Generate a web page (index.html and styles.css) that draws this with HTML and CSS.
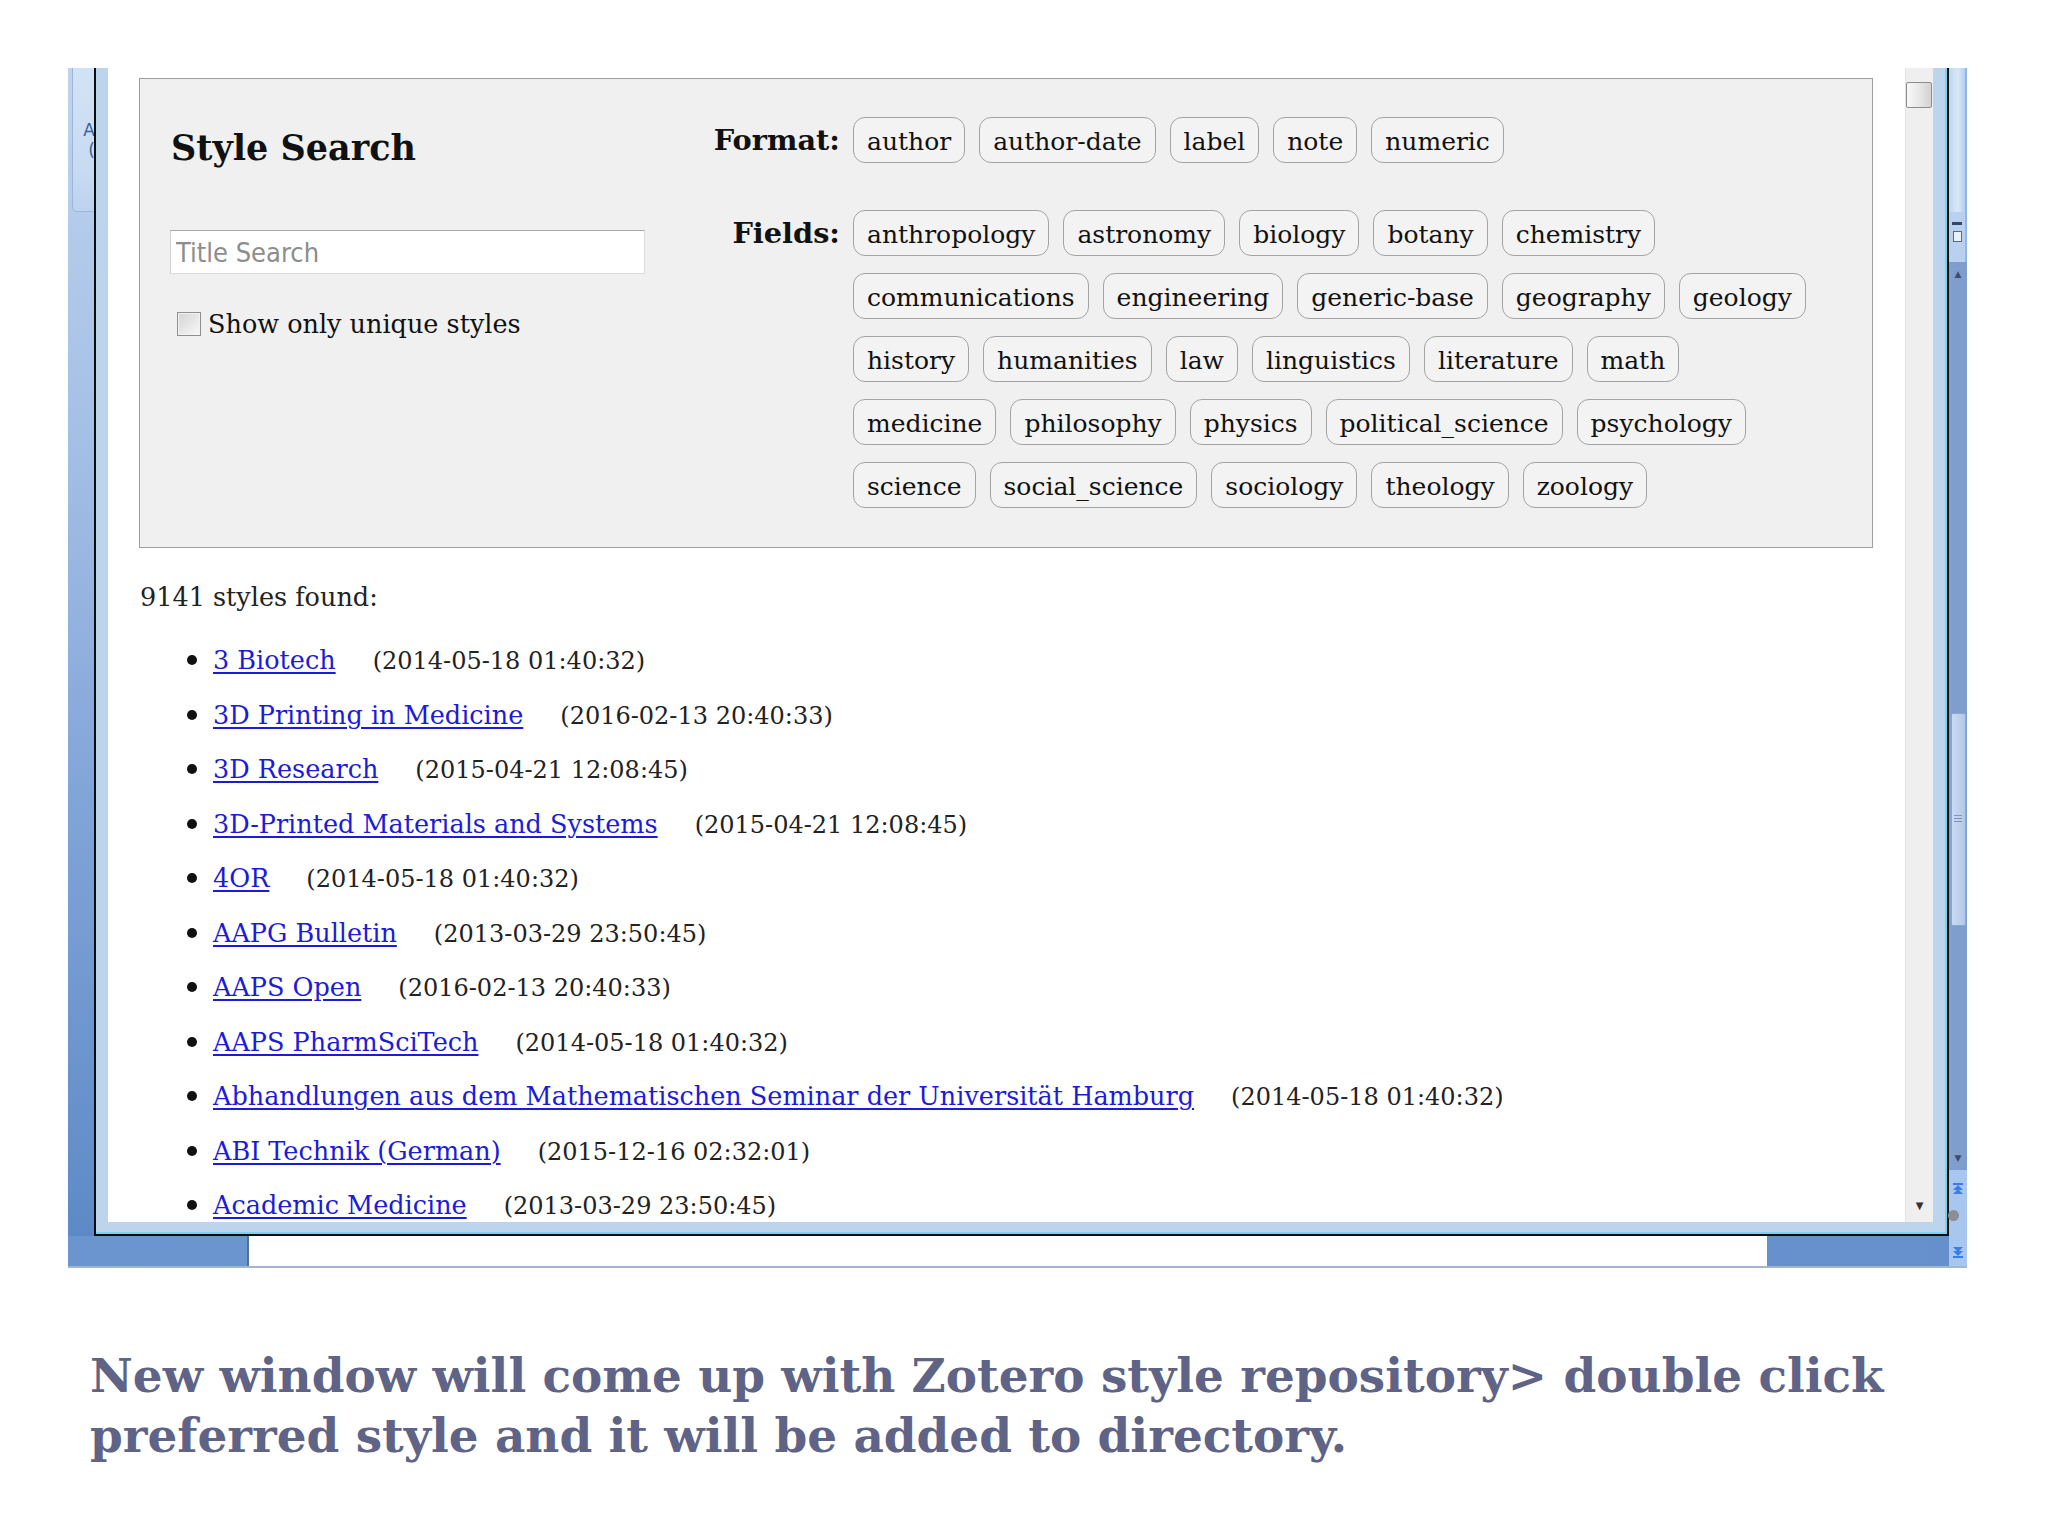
FILE: index.html
```html
<!DOCTYPE html>
<html lang="en">
<head>
<meta charset="utf-8">
<title>Style Search</title>
<link rel="stylesheet" href="styles.css">
</head>
<body>
<div class="desk">
  <div class="leftstrip">
    <div class="tab"><span>A</span><span>(</span></div>
  </div>

  <div class="window">
    <div class="client">
      <div class="page">
        <div class="panel">
          <div class="left">
            <h1 class="title">Style Search</h1>
            <input class="search" type="text" placeholder="Title Search">
            <label class="unique"><input type="checkbox"><span>Show only unique styles</span></label>
          </div>
          <div class="facets">
            <div class="flabel">Format:</div>
            <div class="chips">
              <div class="chiprow">
                <span class="chip">author</span><span class="chip">author-date</span><span class="chip">label</span><span class="chip">note</span><span class="chip">numeric</span>
              </div>
            </div>
            <div class="flabel">Fields:</div>
            <div class="chips">
              <div class="chiprow">
                <span class="chip">anthropology</span><span class="chip">astronomy</span><span class="chip">biology</span><span class="chip">botany</span><span class="chip">chemistry</span>
              </div>
              <div class="chiprow">
                <span class="chip">communications</span><span class="chip">engineering</span><span class="chip">generic-base</span><span class="chip">geography</span><span class="chip">geology</span>
              </div>
              <div class="chiprow">
                <span class="chip">history</span><span class="chip">humanities</span><span class="chip">law</span><span class="chip">linguistics</span><span class="chip">literature</span><span class="chip">math</span>
              </div>
              <div class="chiprow">
                <span class="chip">medicine</span><span class="chip">philosophy</span><span class="chip">physics</span><span class="chip">political_science</span><span class="chip">psychology</span>
              </div>
              <div class="chiprow">
                <span class="chip">science</span><span class="chip">social_science</span><span class="chip">sociology</span><span class="chip">theology</span><span class="chip">zoology</span>
              </div>
            </div>
          </div>
        </div>

        <p class="count">9141 styles found:</p>
        <ul class="styles">
          <li><a href="#">3 Biotech</a><span class="date">(2014-05-18 01:40:32)</span></li>
          <li><a href="#">3D Printing in Medicine</a><span class="date">(2016-02-13 20:40:33)</span></li>
          <li><a href="#">3D Research</a><span class="date">(2015-04-21 12:08:45)</span></li>
          <li><a href="#">3D-Printed Materials and Systems</a><span class="date">(2015-04-21 12:08:45)</span></li>
          <li><a href="#">4OR</a><span class="date">(2014-05-18 01:40:32)</span></li>
          <li><a href="#">AAPG Bulletin</a><span class="date">(2013-03-29 23:50:45)</span></li>
          <li><a href="#">AAPS Open</a><span class="date">(2016-02-13 20:40:33)</span></li>
          <li><a href="#">AAPS PharmSciTech</a><span class="date">(2014-05-18 01:40:32)</span></li>
          <li><a href="#">Abhandlungen aus dem Mathematischen Seminar der Universität Hamburg</a><span class="date">(2014-05-18 01:40:32)</span></li>
          <li><a href="#">ABI Technik (German)</a><span class="date">(2015-12-16 02:32:01)</span></li>
          <li><a href="#">Academic Medicine</a><span class="date">(2013-03-29 23:50:45)</span></li>
        </ul>
      </div>
      <div class="vscroll">
        <div class="thumb"></div>
        <div class="down">&#9660;</div>
      </div>
    </div>
  </div>

  <div class="rs">
    <div class="rs-top"></div>
    <div class="rs-icons"><span class="dash"></span><span class="mini"></span></div>
    <div class="rs-track">
      <div class="arrow">&#9650;</div>
      <div class="rs-gap"></div>
      <div class="rs-thumb"><span class="grip"></span></div>
      <div class="rs-fill"></div>
      <div class="arrow">&#9660;</div>
    </div>
    <div class="rs-bot">
      <svg class="dbl" width="14" height="14" viewBox="0 0 14 14"><rect x="2" y="1" width="10" height="2" fill="#3b7de8"/><path d="M7 3 L12 8 H2 Z" fill="#3b7de8"/><path d="M7 7 L12 12 H2 Z" fill="#3b7de8"/></svg>
      <span class="knob"></span>
    </div>
  </div>

  <div class="bottomstrip"><div class="bar"></div></div>
  <div class="rsb">
    <svg class="dbl" width="14" height="14" viewBox="0 0 14 14"><path d="M2 2 H12 L7 7 Z" fill="#3b7de8"/><path d="M2 6 H12 L7 11 Z" fill="#3b7de8"/><rect x="2" y="11" width="10" height="2" fill="#3b7de8"/></svg>
  </div>
</div>

<p class="caption">New window will come up with Zotero style repository&gt; double click<br>preferred style and it will be added to directory.</p>
</body>
</html>
```

FILE: styles.css
```css
html, body {
  margin: 0;
  padding: 0;
  background: #ffffff;
}

body {
  width: 2048px;
  height: 1536px;
  overflow: hidden;
  font-family: "DejaVu Serif", serif;
  color: #111111;
}

/* ---------- desktop / window chrome ---------- */
.desk {
  margin: 68px 0 0 68px;
  width: 1899px;
  display: grid;
  grid-template-columns: 26px 1855px 18px;
  grid-template-rows: 1168px 32px;
}

.leftstrip {
  grid-column: 1;
  grid-row: 1;
  overflow: hidden;
  background: linear-gradient(180deg, #bfd4ee 0%, #a6c1e6 30%, #82a5d8 62%, #5d8ac6 100%);
}

.tab {
  margin-left: 4px;
  width: 30px;
  height: 144px;
  box-sizing: border-box;
  border: 1px solid #9ab6dc;
  border-top: none;
  border-radius: 0 0 0 5px;
  background: linear-gradient(180deg, #d3e3f5 0%, #c8dbf1 70%, #bcd3ee 100%);
  display: flex;
  flex-direction: column;
  align-items: flex-end;
  padding: 52px 6px 0 0;
  font-family: "DejaVu Sans", sans-serif;
  font-size: 17px;
  line-height: 20px;
  color: #3a5f9f;
}

.window {
  grid-column: 2;
  grid-row: 1;
  box-sizing: border-box;
  border: 2px solid #0d0d0d;
  border-top: none;
  padding: 0 14px 12px 12px;
  background: #bdd4ed;
  box-shadow: inset -2px -2px 0 #7ad3ec;
}

.client {
  display: flex;
  height: 100%;
}

.page {
  flex: 1;
  min-width: 0;
  background: #ffffff;
  overflow: hidden;
  padding: 10px 32px 0 31px;
}

.vscroll {
  width: 28px;
  flex: none;
  box-sizing: border-box;
  background: #efefef;
  border-left: 1px solid #e3e3e3;
  display: flex;
  flex-direction: column;
}

.thumb {
  margin: 14px 1px 0 0;
  height: 26px;
  box-sizing: border-box;
  border: 1px solid #8c8c8c;
  border-radius: 2px;
  background: linear-gradient(90deg, #f8f8f8 0%, #e8e8e8 50%, #d2d2d2 100%);
}

.down {
  margin-top: auto;
  height: 32px;
  text-align: center;
  font-family: "DejaVu Sans", sans-serif;
  font-size: 10px;
  line-height: 32px;
  color: #333333;
}

/* right strip (background window) */
.rs {
  grid-column: 3;
  grid-row: 1;
  display: flex;
  flex-direction: column;
  background: #7f9ecd;
}

.rs-top {
  height: 144px;
  box-sizing: border-box;
  border-right: 2px solid #8fb7ec;
  background: linear-gradient(90deg, #bed6f0 0%, #d9e8f8 55%, #b4cfef 100%);
}

.rs-icons {
  height: 50px;
  box-sizing: border-box;
  border-right: 2px solid #8fb7ec;
  background: #b9d1ee;
  display: flex;
  flex-direction: column;
  align-items: center;
  gap: 6px;
  padding-top: 10px;
}

.dash {
  width: 10px;
  height: 3px;
  background: #39465e;
}

.mini {
  width: 9px;
  height: 11px;
  box-sizing: border-box;
  border: 1px solid #5b6b86;
  background: #e9f1fb;
}

.rs-track {
  flex: 1;
  display: flex;
  flex-direction: column;
  align-items: center;
  background: #7f9ecd;
}

.arrow {
  height: 24px;
  font-family: "DejaVu Sans", sans-serif;
  font-size: 9px;
  line-height: 24px;
  color: #3d4d6b;
}

.rs-gap {
  height: 427px;
}

.rs-thumb {
  width: 15px;
  height: 213px;
  box-sizing: border-box;
  border: 1px solid #8aa7d3;
  border-radius: 2px;
  background: linear-gradient(90deg, #cadbf1 0%, #b3c9e9 100%);
  display: flex;
  align-items: center;
  justify-content: center;
}

.grip {
  width: 8px;
  height: 9px;
  background: repeating-linear-gradient(180deg, #7d93b8 0 1px, transparent 1px 3px);
}

.rs-fill {
  flex: 1;
}

.rs-bot {
  height: 66px;
  background: #a9c7ee;
  display: flex;
  flex-direction: column;
  align-items: center;
  padding-top: 12px;
  box-sizing: border-box;
  gap: 14px;
}

.knob {
  width: 11px;
  height: 11px;
  border-radius: 50%;
  background: #8b8e93;
  margin-left: -10px;
}

.bottomstrip {
  grid-column: 1 / 3;
  grid-row: 2;
  box-sizing: border-box;
  background: linear-gradient(90deg, #6a95cf 0%, #6590cc 100%);
  border-bottom: 2px solid #a2b6d2;
  padding-left: 179px;
}

.bar {
  width: 1520px;
  height: 30px;
  box-sizing: border-box;
  background: #ffffff;
  border-left: 2px solid #50709a;
}

.rsb {
  grid-column: 3;
  grid-row: 2;
  box-sizing: border-box;
  background: #a9c7ee;
  border-bottom: 2px solid #a2b6d2;
  display: flex;
  justify-content: center;
  padding-top: 9px;
}

.dbl {
  display: block;
}

/* ---------- page content ---------- */
.panel {
  box-sizing: border-box;
  height: 470px;
  border: 1px solid #9f9f9f;
  background: #f0f0f0;
  padding: 38px 0 0 31px;
  display: flex;
}

.left {
  width: 530px;
  flex: none;
}

.title {
  margin: 8px 0 0;
  font-size: 35px;
  font-weight: bold;
  line-height: 46px;
  color: #111111;
}

.search {
  display: block;
  margin: 59px 0 0 -1px;
  width: 475px;
  height: 44px;
  box-sizing: border-box;
  border: 1px solid #dcdcdc;
  border-top-color: #a9a9a9;
  border-left-color: #cfcfcf;
  background: #ffffff;
  padding: 0 0 0 5px;
  font-family: "DejaVu Sans Condensed", "DejaVu Sans", sans-serif;
  font-stretch: condensed;
  font-size: 27px;
  color: #333333;
  outline: none;
}

.search::placeholder {
  color: #8d8d8d;
}

.unique {
  display: flex;
  align-items: center;
  gap: 7px;
  margin: 35px 0 0 6px;
  height: 30px;
  font-size: 25.5px;
  line-height: 30px;
  color: #111111;
}

.unique input {
  appearance: none;
  -webkit-appearance: none;
  margin: 0;
  width: 24px;
  height: 24px;
  flex: none;
  box-sizing: border-box;
  border: 1px solid #8f8f8f;
  background: linear-gradient(135deg, #d4d4d4 0%, #f9f9f9 100%);
  box-shadow: inset 0 0 0 1px #f3f3f3;
}

.facets {
  display: grid;
  grid-template-columns: 139px auto;
  column-gap: 13px;
  row-gap: 47px;
  align-content: start;
  align-items: start;
}

.flabel {
  height: 46px;
  box-sizing: border-box;
  padding-top: 3px;
  font-size: 28.8px;
  font-weight: bold;
  line-height: 41px;
  text-align: right;
  white-space: nowrap;
  color: #111111;
}

.chips {
  display: flex;
  flex-direction: column;
  gap: 17px;
}

.chiprow {
  display: flex;
  gap: 14px;
}

.chip {
  box-sizing: border-box;
  height: 46px;
  padding: 3px 13px 0;
  border: 1px solid #a3a3a3;
  border-radius: 12px;
  background: #f3f3f3;
  font-size: 25px;
  line-height: 41px;
  color: #111111;
  white-space: nowrap;
}

.count {
  margin: 34px 0 0 1px;
  font-size: 25.5px;
  line-height: 30px;
  color: #222222;
}

.styles {
  list-style: none;
  margin: 21px 0 0;
  padding: 0 0 0 74px;
}

.styles li {
  height: 54.5px;
  font-size: 25.5px;
  line-height: 54.5px;
  white-space: nowrap;
}

.styles li::before {
  content: "";
  display: inline-block;
  width: 10px;
  height: 10px;
  border-radius: 50%;
  background: #111111;
  margin-left: -26px;
  margin-right: 16px;
  vertical-align: 4px;
}

.styles a {
  color: #1b1bd8;
  text-decoration: underline;
  text-decoration-thickness: 2px;
  text-underline-offset: 3px;
}

.date {
  margin-left: 37px;
  font-size: 24px;
  line-height: 1;
  color: #222222;
}

/* ---------- slide caption ---------- */
.caption {
  margin: 78px 0 0 90px;
  font-size: 46.9px;
  font-weight: bold;
  line-height: 60px;
  color: #5f6385;
}
```
